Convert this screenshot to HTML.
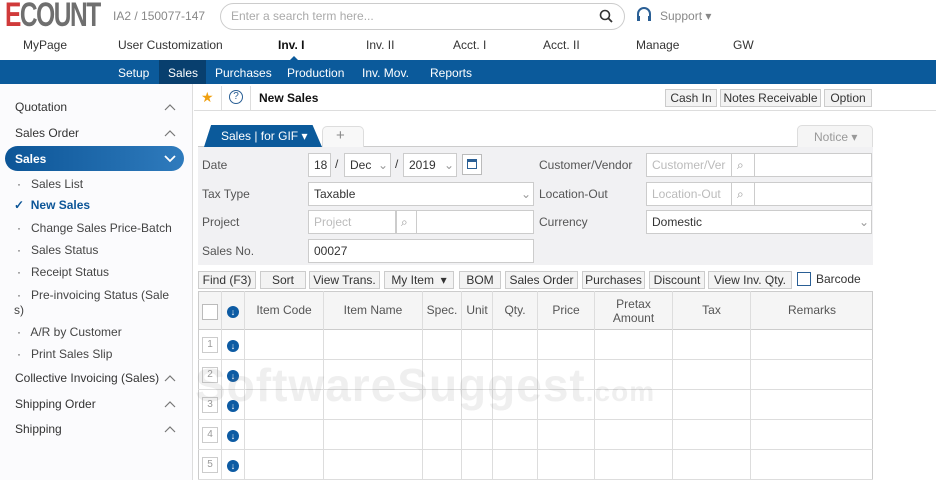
<!DOCTYPE html>
<html><head><meta charset="utf-8"><style>
*{margin:0;padding:0;box-sizing:border-box}
body{width:936px;height:480px;overflow:hidden;background:#fff;font-family:"Liberation Sans",sans-serif;font-size:12px;color:#333;position:relative}
.a{position:absolute;white-space:nowrap}
.btn{position:absolute;height:18px;border:1px solid #ccc;background:#f3f3f3;font-size:12px;line-height:16px;text-align:center;color:#333}
.inp{position:absolute;height:24px;border:1px solid #ccc;background:#fff;line-height:22px;padding-left:5px;font-size:12px}
.lab{position:absolute;color:#555;font-size:12px}
.ph{color:#bbb}
.side{position:absolute;left:15px;font-size:12px;color:#333}
.sub{position:absolute;left:17px;font-size:12px;color:#444}
.car{position:absolute;left:164px}
.th{position:absolute;top:291px;height:39px;border-right:1px solid #ddd;text-align:center;line-height:39px;color:#555}
.dot{position:absolute;width:12px;height:12px;border-radius:50%;background:#0d5ba3;color:#fff;font-size:9px;line-height:12px;text-align:center}
</style></head><body>
<!-- header -->
<div class="a" style="left:5px;top:-2px;font-size:34px;font-weight:bold;letter-spacing:-2px;color:#6f6f6f;line-height:34px;transform:scaleX(0.72);transform-origin:left top"><span style="color:#d03a3a">E</span>COUNT</div>
<div class="a" style="left:113px;top:9px;color:#888;font-size:12px">IA2 / 150077-147</div>
<div class="a" style="left:220px;top:3px;width:405px;height:27px;border:1px solid #ccc;border-radius:14px"></div>
<div class="a" style="left:231px;top:9px;color:#aaa">Enter a search term here...</div>
<svg class="a" style="left:599px;top:9px" width="14" height="14"><circle cx="6" cy="6" r="4.5" fill="none" stroke="#333" stroke-width="1.6"/><line x1="9.3" y1="9.3" x2="13" y2="13" stroke="#333" stroke-width="1.8"/></svg>
<svg class="a" style="left:635px;top:6px" width="18" height="18"><path d="M3 11 V8 a6 6 0 0 1 12 0 V11" fill="none" stroke="#2a5f95" stroke-width="2"/><rect x="2" y="10" width="3" height="5" fill="#2a5f95"/><rect x="13" y="10" width="3" height="5" fill="#2a5f95"/></svg>
<div class="a" style="left:660px;top:9px;color:#888">Support ▾</div>
<div class="a" style="left:23px;top:38px">MyPage</div>
<div class="a" style="left:118px;top:38px">User Customization</div>
<div class="a" style="left:278px;top:38px;font-weight:bold;color:#111">Inv. I</div>
<div class="a" style="left:366px;top:38px">Inv. II</div>
<div class="a" style="left:453px;top:38px">Acct. I</div>
<div class="a" style="left:543px;top:38px">Acct. II</div>
<div class="a" style="left:636px;top:38px">Manage</div>
<div class="a" style="left:733px;top:38px">GW</div>
<div class="a" style="left:0;top:60px;width:936px;height:24px;background:#0b5a9b"></div>
<div class="a" style="left:289px;top:56px;width:0;height:0;border-left:5px solid transparent;border-right:5px solid transparent;border-bottom:5px solid #0b5a9b"></div>
<div class="a" style="left:159px;top:60px;width:47px;height:24px;background:#083f6e"></div>
<div class="a" style="top:66px;left:118px;color:#fff">Setup</div>
<div class="a" style="top:66px;left:168px;color:#fff">Sales</div>
<div class="a" style="top:66px;left:215px;color:#fff">Purchases</div>
<div class="a" style="top:66px;left:287px;color:#fff">Production</div>
<div class="a" style="top:66px;left:362px;color:#fff">Inv. Mov.</div>
<div class="a" style="top:66px;left:430px;color:#fff">Reports</div>
<!-- sidebar -->
<div class="a" style="left:0;top:84px;width:193px;height:396px;background:#fbfbfd;border-right:1px solid #ddd"></div>
<div class="side" style="top:100px">Quotation</div><svg class="car" style="top:103px" width="12" height="8"><path d="M1 7 L6 2 L11 7" fill="none" stroke="#777" stroke-width="1.2"/></svg>
<div class="side" style="top:126px">Sales Order</div><svg class="car" style="top:129px" width="12" height="8"><path d="M1 7 L6 2 L11 7" fill="none" stroke="#777" stroke-width="1.2"/></svg>
<div class="a" style="left:5px;top:146px;width:179px;height:25px;border-radius:13px;background:linear-gradient(90deg,#0c5597,#2f7bbd)"></div>
<div class="side" style="top:152px;color:#fff;font-weight:bold">Sales</div>
<svg class="car" style="top:155px" width="12" height="8"><path d="M1 1 L6 6 L11 1" fill="none" stroke="#fff" stroke-width="1.8"/></svg>
<div class="sub" style="top:177px">·&nbsp;&nbsp; Sales List</div>
<div class="a" style="left:14px;top:198px;color:#0c5597;font-weight:bold">✓&nbsp; New Sales</div>
<div class="sub" style="top:221px">·&nbsp;&nbsp; Change Sales Price-Batch</div>
<div class="sub" style="top:243px">·&nbsp;&nbsp; Sales Status</div>
<div class="sub" style="top:265px">·&nbsp;&nbsp; Receipt Status</div>
<div class="sub" style="top:288px">·&nbsp;&nbsp; Pre-invoicing Status (Sale</div>
<div class="a" style="left:14px;top:303px;color:#444">s)</div>
<div class="sub" style="top:325px">·&nbsp;&nbsp; A/R by Customer</div>
<div class="sub" style="top:347px">·&nbsp;&nbsp; Print Sales Slip</div>
<div class="side" style="top:371px">Collective Invoicing (Sales)</div><svg class="car" style="top:374px" width="12" height="8"><path d="M1 7 L6 2 L11 7" fill="none" stroke="#777" stroke-width="1.2"/></svg>
<div class="side" style="top:397px">Shipping Order</div><svg class="car" style="top:400px" width="12" height="8"><path d="M1 7 L6 2 L11 7" fill="none" stroke="#777" stroke-width="1.2"/></svg>
<div class="side" style="top:422px">Shipping</div><svg class="car" style="top:425px" width="12" height="8"><path d="M1 7 L6 2 L11 7" fill="none" stroke="#777" stroke-width="1.2"/></svg>
<!-- toolbar -->
<div class="a" style="left:194px;top:110px;width:742px;height:1px;background:#ddd"></div>
<div class="a" style="left:221px;top:86px;width:1px;height:24px;background:#ddd"></div>
<div class="a" style="left:250px;top:86px;width:1px;height:24px;background:#ddd"></div>
<div class="a" style="left:201px;top:89px;color:#f0a010;font-size:14px">★</div>
<div class="a" style="left:229px;top:90px;width:14px;height:14px;border:1px solid #2a5f95;border-radius:50%;font-size:10px;line-height:12px;text-align:center;color:#2a5f95">?</div>
<div class="a" style="left:259px;top:91px;font-weight:bold;color:#111">New Sales</div>
<div class="btn" style="left:665px;top:89px;width:52px">Cash In</div>
<div class="btn" style="left:720px;top:89px;width:101px">Notes Receivable</div>
<div class="btn" style="left:824px;top:89px;width:48px">Option</div>
<!-- tabs -->
<div class="a" style="left:198px;top:146px;width:675px;height:1px;background:#ccc"></div>
<div class="a" style="left:204px;top:125px;width:118px;height:22px;background:#0b5a9b;clip-path:polygon(6% 0,92% 0,100% 100%,0 100%)"></div>
<div class="a" style="left:221px;top:129px;color:#fff">Sales | for GIF ▾</div>
<div class="a" style="left:322px;top:126px;width:42px;height:21px;border:1px solid #ddd;border-bottom:none;background:#f8f8f8;border-radius:5px 5px 0 0"></div>
<div class="a" style="left:336px;top:127px;color:#888;font-size:15px">+</div>
<div class="a" style="left:797px;top:125px;width:76px;height:22px;border:1px solid #ddd;border-bottom:none;background:#f5f5f5;border-radius:5px 5px 0 0"></div>
<div class="a" style="left:814px;top:130px;color:#999">Notice ▾</div>
<!-- form -->
<div class="a" style="left:198px;top:147px;width:675px;height:118px;background:#f1f1f3"></div>
<div class="lab" style="left:202px;top:158px">Date</div>
<div class="lab" style="left:202px;top:187px">Tax Type</div>
<div class="lab" style="left:202px;top:215px">Project</div>
<div class="lab" style="left:202px;top:244px">Sales No.</div>
<div class="inp" style="left:308px;top:153px;width:23px">18</div>
<div class="a" style="left:335px;top:157px">/</div>
<div class="inp" style="left:344px;top:153px;width:47px">Dec <span style="position:absolute;right:2px;color:#999">⌄</span></div>
<div class="a" style="left:395px;top:157px">/</div>
<div class="inp" style="left:403px;top:153px;width:54px">2019 <span style="position:absolute;right:2px;color:#999">⌄</span></div>
<div class="a" style="left:462px;top:154px;width:20px;height:21px;border:1px solid #bbb;background:#fff"><div style="margin:4px 4px;width:10px;height:10px;border:1px solid #2a5f95;border-top-width:3px"></div></div>
<div class="inp" style="left:308px;top:182px;width:226px">Taxable<span style="position:absolute;right:2px;color:#999">⌄</span></div>
<div class="inp ph" style="left:308px;top:210px;width:88px">Project</div>
<div class="inp" style="left:396px;top:210px;width:21px;color:#999;padding-left:4px">⌕</div>
<div class="inp" style="left:416px;top:210px;width:118px"></div>
<div class="inp" style="left:308px;top:239px;width:226px">00027</div>
<div class="lab" style="left:539px;top:158px">Customer/Vendor</div>
<div class="lab" style="left:539px;top:187px">Location-Out</div>
<div class="lab" style="left:539px;top:215px">Currency</div>
<div class="inp ph" style="left:646px;top:153px;width:86px;overflow:hidden">Customer/Ver</div>
<div class="inp" style="left:731px;top:153px;width:24px;color:#999">⌕</div>
<div class="inp" style="left:754px;top:153px;width:118px"></div>
<div class="inp ph" style="left:646px;top:182px;width:86px">Location-Out</div>
<div class="inp" style="left:731px;top:182px;width:24px;color:#999">⌕</div>
<div class="inp" style="left:754px;top:182px;width:118px"></div>
<div class="inp" style="left:646px;top:210px;width:226px">Domestic<span style="position:absolute;right:2px;color:#999">⌄</span></div>
<!-- buttons -->
<div class="btn" style="left:198px;top:271px;width:58px">Find (F3)</div>
<div class="btn" style="left:260px;top:271px;width:46px">Sort</div>
<div class="btn" style="left:309px;top:271px;width:71px">View Trans.</div>
<div class="btn" style="left:384px;top:271px;width:70px">My Item &nbsp;▾</div>
<div class="btn" style="left:459px;top:271px;width:42px">BOM</div>
<div class="btn" style="left:505px;top:271px;width:73px">Sales Order</div>
<div class="btn" style="left:582px;top:271px;width:63px">Purchases</div>
<div class="btn" style="left:649px;top:271px;width:56px">Discount</div>
<div class="btn" style="left:708px;top:271px;width:84px">View Inv. Qty.</div>
<div class="a" style="left:797px;top:272px;width:14px;height:14px;border:1px solid #2a5f95;background:#fff"></div>
<div class="a" style="left:816px;top:272px">Barcode</div>
<!-- table -->
<div class="a" style="left:198px;top:291px;width:675px;height:189px;border:1px solid #ccc;border-bottom:none;background:#fff"></div>
<div class="a" style="left:198px;top:291px;width:675px;height:39px;background:#f5f5f5;border:1px solid #ccc"></div>
<div class="th" style="left:198px;width:24px"></div>
<div class="th" style="left:222px;width:23px"></div>
<div class="th" style="left:245px;width:79px">Item Code</div>
<div class="th" style="left:324px;width:99px">Item Name</div>
<div class="th" style="left:423px;width:39px">Spec.</div>
<div class="th" style="left:462px;width:31px">Unit</div>
<div class="th" style="left:493px;width:45px">Qty.</div>
<div class="th" style="left:538px;width:57px">Price</div>
<div class="th" style="left:595px;width:78px;line-height:14px;padding-top:6px">Pretax<br>Amount</div>
<div class="th" style="left:673px;width:78px">Tax</div>
<div class="th" style="left:751px;width:122px;border-right:none">Remarks</div>
<div class="a" style="left:202px;top:304px;width:16px;height:16px;border:1px solid #bbb;background:#fff"></div>
<div class="dot" style="left:227px;top:306px">↓</div>
<div id="rows"></div>
<div class="a" style="left:195px;top:358px;font-size:46px;font-weight:bold;color:rgba(120,120,120,0.12);letter-spacing:1px">SoftwareSuggest<span style="font-size:28px">.com</span></div>
<script>
var h='',xs=[222,245,324,423,462,493,538,595,673,751];
for(var i=0;i<5;i++){var t=330+i*30;
h+='<div class="a" style="left:198px;top:'+(t+29)+'px;width:675px;height:1px;background:#ddd"></div>';
h+='<div class="a" style="left:202px;top:'+(t+7)+'px;width:16px;height:16px;border:1px solid #ccc;font-size:10px;color:#999;text-align:center;line-height:14px">'+(i+1)+'</div>';
h+='<div class="dot" style="left:227px;top:'+(t+10)+'px">↓</div>';}
xs.forEach(function(x){h+='<div class="a" style="left:'+(x-1)+'px;top:291px;width:1px;height:189px;background:#ddd"></div>';});
document.getElementById('rows').innerHTML=h;
</script>
</body></html>
